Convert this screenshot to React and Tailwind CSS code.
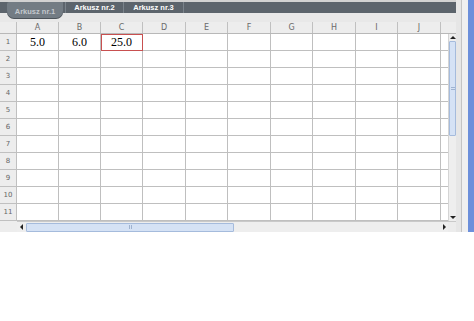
import React from "react";

const COLS = [
  ["A", 42], ["B", 42], ["C", 42], ["D", 43], ["E", 42],
  ["F", 43], ["G", 42], ["H", 43], ["I", 42], ["J", 43],
];
const ROWS = [1, 2, 3, 4, 5, 6, 7, 8, 9, 10, 11];
const DATA = { "1A": "5.0", "1B": "6.0", "1C": "25.0" };

function Tri({ dir }) {
  // tiny black arrow for the scrollbar buttons
  const pts = {
    up: "0,4 3,1 6,4",
    down: "0,1 3,4 6,1",
    left: "4,0 1,3 4,6",
    right: "1,0 4,3 1,6",
  }[dir];
  const vert = dir === "up" || dir === "down";
  return (
    <svg width={vert ? 6 : 5} height={vert ? 5 : 6} viewBox={vert ? "0 0 6 5" : "0 0 5 6"}>
      <polygon points={pts} fill="#222" />
    </svg>
  );
}

function Tabs() {
  const label = "text-[7.5px] leading-[9px] font-bold font-['Liberation_Sans',sans-serif]";
  return (
    <div className="h-[21px] bg-[#e8e8e8] flex flex-col">
      <div className="h-[2px] bg-[#d2d2d2]" />
      <div className="h-[11px] bg-[#5c646c] flex items-start">
        <div className="ml-[7px] w-[56px] h-[16px] bg-[#737c84] rounded-b-[7px] rounded-tl-[2px] flex items-end justify-center pb-[2px] shadow-[0_1px_0_#4d545a]">
          <span className={label + " text-[#c3c8cd]"}>Arkusz nr.1</span>
        </div>
        <div className="w-[3px] h-[11px] border-r border-[#7a838b]" />
        <div className="w-[58px] h-[11px] flex items-center justify-center border-r border-[#7a838b]">
          <span className={label + " text-white"}>Arkusz nr.2</span>
        </div>
        <div className="w-[60px] h-[11px] flex items-center justify-center border-r border-[#7a838b]">
          <span className={label + " text-white"}>Arkusz nr.3</span>
        </div>
      </div>
    </div>
  );
}

function HeaderRow() {
  return (
    <div className="flex h-[12px] mt-[1px] bg-[#ededed] border-b border-[#b8b8b8]">
      <div className="w-[17px] border-r border-[#c0c0c0]" />
      {COLS.map(([c, w]) => (
        <div
          key={c}
          style={{ width: w }}
          className="border-r border-[#c0c0c0] flex items-center justify-center text-[8px] leading-[10px] text-[#6a6a6a]"
        >
          {c}
        </div>
      ))}
      <div className="w-[15px]" />
    </div>
  );
}

function Grid() {
  return (
    <div className="w-[448px] flex flex-col">
      {ROWS.map((r) => (
        <div key={r} className="flex h-[17px]">
          <div className="w-[17px] bg-[#ededed] border-r border-b border-[#c0c0c0] flex items-center justify-center text-[7px] text-[#666666]">
            {r}
          </div>
          {COLS.map(([c, w]) => {
            const v = DATA[r + c];
            const sel = r === 1 && c === "C";
            return (
              <div
                key={c}
                style={{ width: w }}
                className={
                  "bg-white border-r border-b border-[#bfbfbf] flex items-center justify-center text-[12px] text-black font-['Liberation_Serif',serif] " +
                  (sel ? "outline outline-1 -outline-offset-1 outline-[#c85050]" : "")
                }
              >
                {v}
              </div>
            );
          })}
          <div className="w-[7px] bg-white border-b border-[#bfbfbf]" />
        </div>
      ))}
    </div>
  );
}

function VScroll() {
  return (
    <div className="w-[8px] bg-[#eeeeee] border-l border-[#d4d4d4] flex flex-col items-stretch">
      <div className="h-[7px] flex items-center justify-center">
        <Tri dir="up" />
      </div>
      <div className="h-[95px] bg-[#d5e2f5] border border-[#a5bbdc] rounded-[1px] flex items-center justify-center">
        <div className="w-[4px] h-[3px] border-y border-[#9fb3d0]" />
      </div>
      <div className="flex-1" />
      <div className="h-[7px] flex items-center justify-center">
        <Tri dir="down" />
      </div>
    </div>
  );
}

function HScroll() {
  return (
    <div className="flex h-[11px]">
      <div className="w-[17px] bg-[#ededed]" />
      <div className="w-[431px] bg-[#eeeeee] border-t border-[#c9c9c9] flex items-center">
        <div className="w-[9px] flex items-center justify-center">
          <Tri dir="left" />
        </div>
        <div className="w-[208px] h-[9px] bg-[#d5e2f5] border border-[#a5bbdc] rounded-[1px] flex items-center justify-center">
          <div className="w-[3px] h-[4px] border-x border-[#9fb3d0]" />
        </div>
        <div className="flex-1" />
        <div className="w-[8px] flex items-center justify-center">
          <Tri dir="right" />
        </div>
      </div>
      <div className="w-[8px] bg-[#ececec] border-t border-[#c9c9c9]" />
    </div>
  );
}

export default function App() {
  return (
    <div className="w-[474px] h-[321px] bg-white overflow-hidden font-['DejaVu_Sans',sans-serif]">
      <div className="flex h-[232px]">
        <div className="w-[456px] flex flex-col bg-[#e8e8e8]">
          <Tabs />
          <HeaderRow />
          <div className="flex h-[187px]">
            <Grid />
            <VScroll />
          </div>
          <HScroll />
        </div>
        <div className="w-[18px] bg-[#e6e6e6] flex">
          <div className="w-[5px]" />
          <div className="w-[1px] bg-[#c4c4c4]" />
          <div className="w-[6px] bg-[#f0f0f0]" />
          <div className="flex-1 bg-[#6c8fdb]" />
        </div>
      </div>
    </div>
  );
}
